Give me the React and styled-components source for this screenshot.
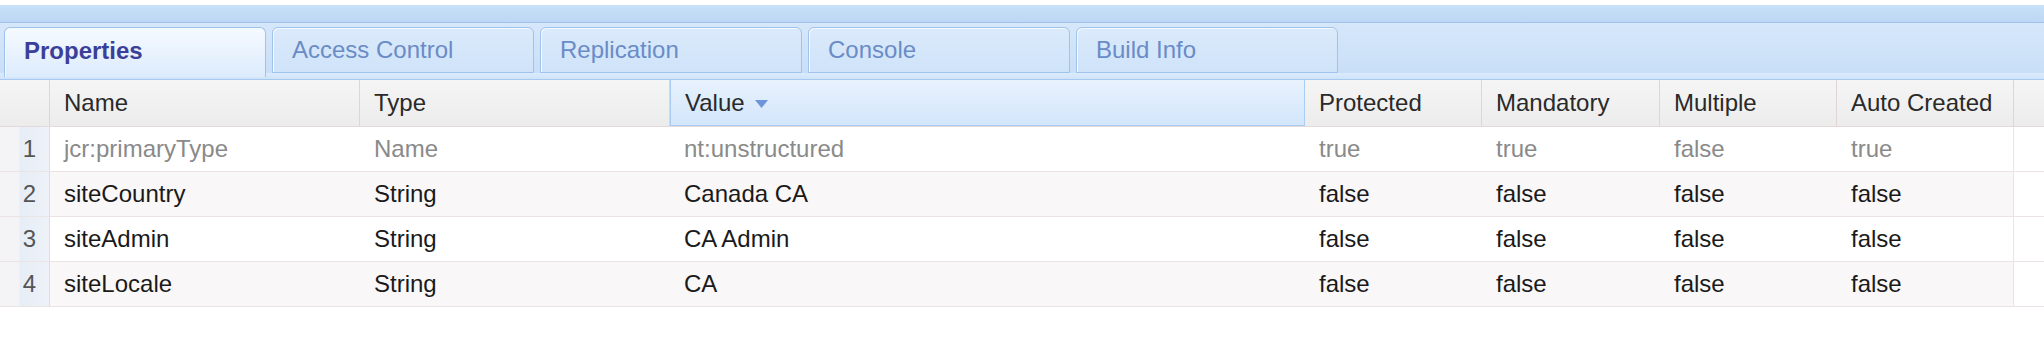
import React from 'react';
import styled, {createGlobalStyle} from 'styled-components';

const GlobalStyle = createGlobalStyle`
  html, body {
    margin: 0;
    padding: 0;
    background: #ffffff;
    font-family: "Liberation Sans", Arial, sans-serif;
  }
`

const cols = '50px 310px 310px 635px 177px 178px 177px 177px 1fr'

const Page = styled.div`
  width: 2044px;
  padding-top: 5px;
  background: #fff;
`

const TopBand = styled.div`
  height: 17px;
  background: linear-gradient(#c9e0f8, #bcd7f5);
  border-bottom: 1px solid #9fc3ec;
`

const TabStrip = styled.div`
  display: flex;
  align-items: flex-end;
  gap: 6px;
  height: 50px;
  padding-left: 4px;
  background: linear-gradient(#d6e7fa, #c9dff7);
`

const Tab = styled.div`
  box-sizing: border-box;
  width: 262px;
  height: ${p => p.$active ? '50px' : '46px'};
  padding: 0 0 ${p => p.$active ? '4px' : '0'} 19px;
  display: flex;
  align-items: center;
  border: 1px solid #9fc3ec;
  border-bottom: ${p => p.$active ? 'none' : '1px solid #9fc3ec'};
  border-radius: 6px 6px 0 0;
  box-shadow: inset 1px 1px 0 #f4f9ff;
  background: ${p => p.$active
    ? 'linear-gradient(#f6faff, #dcebfc)'
    : 'linear-gradient(#dbeafb, #cfe3f9)'};
  color: ${p => p.$active ? '#3b3f9a' : '#6a8cc6'};
  font-size: 24px;
  font-weight: ${p => p.$active ? 'bold' : 'normal'};
  ${p => p.$active ? 'margin-bottom: -4px;' : ''}
`

const StripEdge = styled.div`
  height: 6px;
  background: linear-gradient(#dcebfc, #cfe3f9);
  border-bottom: 1px solid #a8c9ef;
`

const HeaderRow = styled.div`
  display: grid;
  grid-template-columns: ${cols};
  height: 46px;
  border-bottom: 1px solid #e4d8d8;
  background: linear-gradient(#f5f5f5, #ececec);
`

const HeaderCell = styled.div`
  display: flex;
  align-items: center;
  gap: 10px;
  padding-left: ${p => p.$first ? '0' : '14px'};
  border-right: 1px solid ${p => p.$sorted ? '#a9cdf3' : '#e2d4d4'};
  border-left: ${p => p.$sorted ? '1px solid #a9cdf3' : 'none'};
  border-bottom: ${p => p.$sorted ? '1px solid #a9cdf3' : 'none'};
  background: ${p => p.$sorted ? 'linear-gradient(#e8f2fd, #d2e6fb)' : 'transparent'};
  color: #2a2a2a;
  font-size: 24px;
  &:last-child {
    border-right: none;
  }
`

const SortArrow = styled.svg`
  width: 13px;
  height: 8px;
  margin-top: 2px;
`

const Row = styled.div`
  display: grid;
  grid-template-columns: ${cols};
  height: 44px;
  border-bottom: 1px solid #ece4e4;
  background: ${p => p.$striped ? '#f9f7f7' : '#ffffff'};
`

const NumCell = styled.div`
  display: flex;
  align-items: center;
  justify-content: flex-end;
  padding-right: 13px;
  border-right: 1px solid #e6dada;
  background: linear-gradient(90deg, #f4f4f6 0, #f4f4f6 19px, #e6edf6 20px, #eef2f8 100%);
  color: #555;
  font-size: 24px;
`

const Cell = styled.div`
  display: flex;
  align-items: center;
  padding-left: 14px;
  color: ${p => p.$muted ? '#8a8a8a' : '#1a1a1a'};
  font-size: 24px;
  white-space: nowrap;
  border-right: ${p => p.$edge ? '1px solid #ece4e4' : 'none'};
`

const Blank = styled.div`
  background: #ffffff;
`

const tabs = ['Properties', 'Access Control', 'Replication', 'Console', 'Build Info']
const headers = ['Name', 'Type', 'Value', 'Protected', 'Mandatory', 'Multiple', 'Auto Created']
const rows = [
    ['jcr:primaryType', 'Name', 'nt:unstructured', 'true', 'true', 'false', 'true'],
    ['siteCountry', 'String', 'Canada CA', 'false', 'false', 'false', 'false'],
    ['siteAdmin', 'String', 'CA Admin', 'false', 'false', 'false', 'false'],
    ['siteLocale', 'String', 'CA', 'false', 'false', 'false', 'false'],
]

function App() {
    return (
        <>
            <GlobalStyle/>
            <Page>
                <TopBand/>
                <TabStrip>
                    {tabs.map((t, i) => <Tab key={t} $active={i === 0}>{t}</Tab>)}
                </TabStrip>
                <StripEdge/>
                <HeaderRow>
                    <HeaderCell $first/>
                    {headers.map(h => (
                        <HeaderCell key={h} $sorted={h === 'Value'}>
                            {h}
                            {h === 'Value' &&
                                <SortArrow viewBox="0 0 13 8">
                                    <path d="M0 0 L13 0 L6.5 8 Z" fill="#6d95d8"/>
                                </SortArrow>}
                        </HeaderCell>
                    ))}
                    <HeaderCell/>
                </HeaderRow>
                {rows.map((r, i) => (
                    <Row key={i} $striped={i % 2 === 1}>
                        <NumCell>{i + 1}</NumCell>
                        {r.map((v, j) => (
                            <Cell key={j} $muted={i === 0} $edge={j === r.length - 1}>{v}</Cell>
                        ))}
                        <Blank/>
                    </Row>
                ))}
            </Page>
        </>
    );
}

export default App;
